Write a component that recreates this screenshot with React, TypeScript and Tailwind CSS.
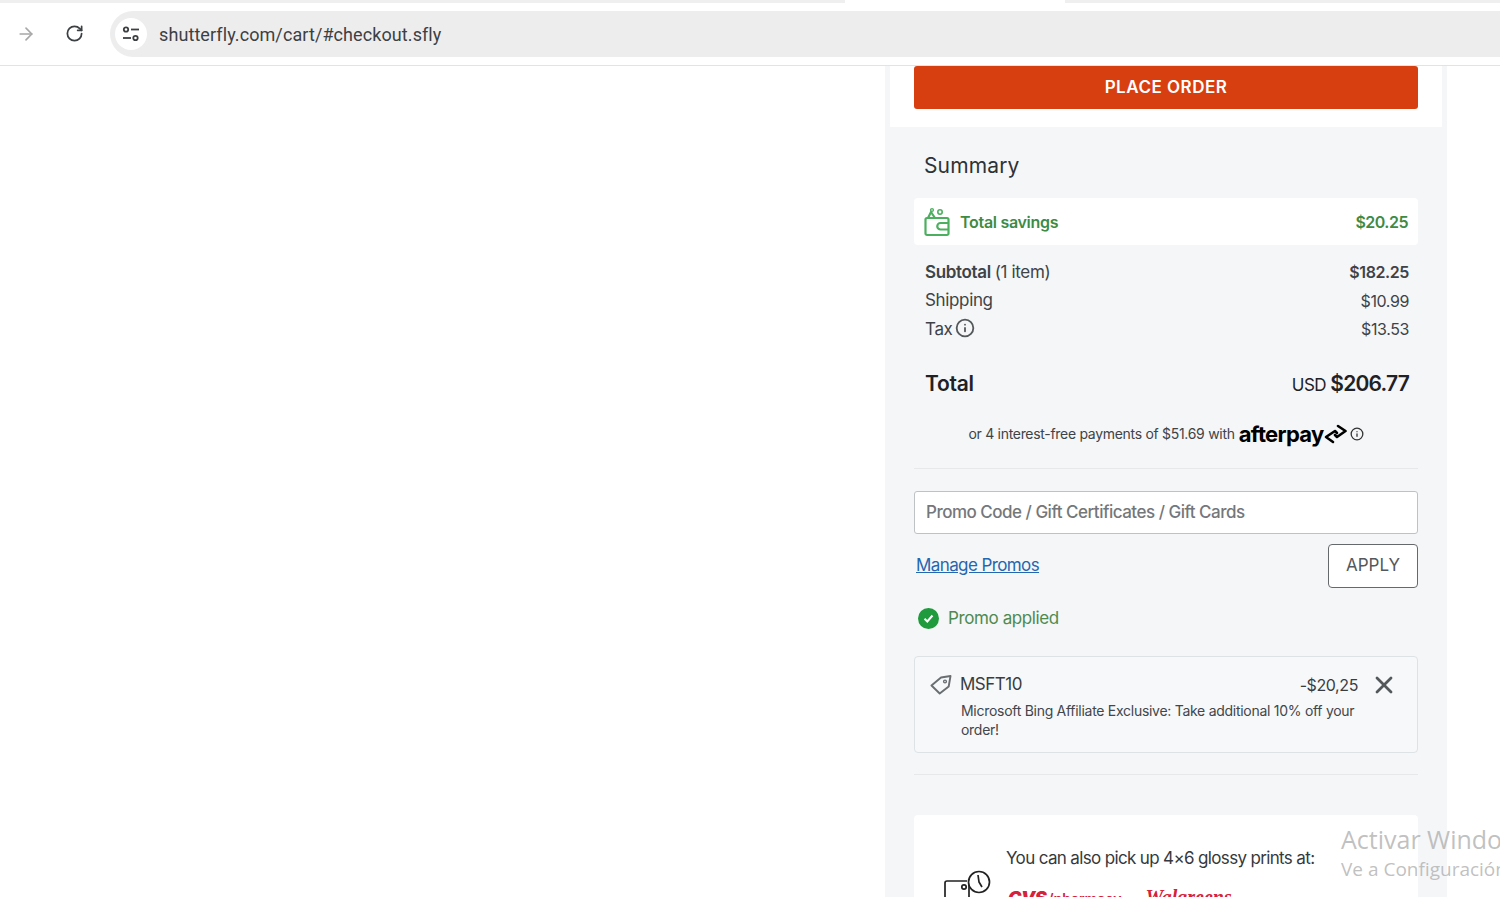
import React from 'react';
import { ArrowRight, Info, RotateCw, X } from 'lucide-react';

const fontInter = { fontFamily: 'Inter, "Liberation Sans", sans-serif' };

const TuneIcon = () => (
  <svg width="18" height="16" viewBox="0 0 18 16" fill="none" stroke="#3c4043" strokeWidth="1.8">
    <circle cx="4" cy="3.5" r="2.2" />
    <path d="M9 3.5h8" />
    <path d="M1 12h8" />
    <circle cx="13.5" cy="12" r="2.2" />
  </svg>
);

const WalletIcon = () => (
  <svg width="26" height="30" viewBox="0 0 26 30" fill="none" stroke="#4caf5f" strokeWidth="2.2" strokeLinejoin="round">
    <path d="M3 11h20a1.5 1.5 0 0 1 1.5 1.5v14a1.5 1.5 0 0 1-1.5 1.500H3a1.5 1.5 0 0 1-1.500-1.500v-14A1.5 1.5 0 0 1 3 11z" />
    <path d="M24.500 16h-8a3 3 0 0 0 0 6.500h8" />
    <path d="M4 11l3-6 4 6" />
    <circle cx="8" cy="3" r="1.400" strokeWidth="1.400" />
    <circle cx="16" cy="5" r="2.200" strokeWidth="1.600" />
  </svg>
);

const PickupIcon = () => (
  <svg width="48" height="34" viewBox="0 0 48 34" fill="none" stroke="#222" strokeWidth="1.700" strokeLinejoin="round">
    <path d="M2 34V13a2 2 0 0 1 2-2h20" />
    <path d="M26 11v23" />
    <circle cx="21" cy="17" r="2.200" />
    <circle cx="36" cy="12" r="10.500" fill="#fff" />
    <path d="M35 5l1 7 3 5" />
  </svg>
);

const AfterpayLoop = () => (
  <svg width="23" height="20" viewBox="0 0 23 20" fill="none" stroke="#000" strokeWidth="2.600" strokeLinejoin="round" strokeLinecap="round">
    <path d="M9 18L2 13l9-6 2 2" />
    <path d="M14 2l7.500 5L13 13l-2-2" />
  </svg>
);

const PromoTag = () => (
  <svg width="22" height="20" viewBox="0 0 22 20" fill="none" stroke="#6b6e71" strokeWidth="1.900" strokeLinejoin="round">
    <path d="M1.500 10.500L11 2.500l9.500-1.500-1.800 10.500-9 7z" />
    <circle cx="15" cy="6.500" r="1.400" strokeWidth="1.400" />
  </svg>
);

const Row = ({ label, value, bold }: { label: React.ReactNode; value: string; bold?: boolean }) => (
  <div className={`flex justify-between items-center h-[28.5px] text-[#3f4347] ${bold ? 'font-semibold text-[#2b2d30]' : ''}`}>
    <div className="flex items-center text-[17px] tracking-[-0.35px]">{label}</div>
    <div className="text-[16px] tracking-[-0.4px]">{value}</div>
  </div>
);

const App = () => {
  return (
    <div className="relative w-[1500px] h-[897px] overflow-hidden bg-white flex flex-col" style={fontInter}>
      <div className="h-[3px] shrink-0 bg-[#efefef] flex pl-[845px]">
        <div className="w-[220px] bg-white" />
      </div>

      <div className="h-[63px] shrink-0 border-b border-[#e3e3e3] flex items-start pt-[8px] pl-[16px]">
        <ArrowRight size={20} strokeWidth={2} className="mt-[13px] text-[#a8a8a8]" />
        <RotateCw size={19} strokeWidth={2.200} className="mt-[13px] ml-[29px] text-[#3c4043]" />
        <div className="ml-[26px] flex-1 h-[46px] rounded-l-full bg-[#eeedee] flex items-center pl-[5px]">
          <div className="w-[32px] h-[32px] rounded-full bg-white flex items-center justify-center">
            <TuneIcon />
          </div>
          <span className="ml-[12px] text-[18px] tracking-[0.09px] text-[#3c4043]" style={{ fontFamily: 'Roboto, sans-serif' }}>
            shutterfly.com/cart/#checkout.sfly
          </span>
        </div>
      </div>

      <div className="flex-1 min-h-0 pl-[885px]">
        <div className="w-[562px] h-full bg-[#f4f6f8] px-[5px]">
          <div className="bg-white h-[61px] px-[24px]">
            <button className="w-full h-[43px] rounded-[3px] bg-[#d83f10] text-white text-[17px] font-semibold tracking-[0.5px]">
              PLACE ORDER
            </button>
          </div>

          <div className="px-[24px]">
            <div className="mt-[24px] pl-[10px] text-[21px] leading-[30px] tracking-[0.15px] text-[#2f3235]">Summary</div>

            <div className="mt-[17px] h-[47px] rounded-[4px] bg-white flex items-center justify-between pl-[10px] pr-[10px] text-[#3d8b45] text-[16px] font-semibold tracking-[-0.3px]">
              <div className="flex items-center gap-[10px]">
                <WalletIcon />
                <span>Total savings</span>
              </div>
              <span className="tracking-[-0.5px]">$20.25</span>
            </div>

            <div className="mt-[13px] pl-[11px] pr-[9px]">
              <Row bold label={<span>Subtotal <span className="font-normal text-[#3f4347]">(1 item)</span></span>} value="$182.25" />
              <Row label="Shipping" value="$10.99" />
              <Row
                label={
                  <>
                    Tax
                    <Info size={20} strokeWidth={2.200} className="ml-[2px] -mt-[3px] text-[#55585b]" />
                  </>
                }
                value="$13.53"
              />
              <div className="mt-[25px] flex justify-between items-center h-[30px] text-[#1f2124] font-semibold">
                <span className="text-[21px] tracking-[-0.3px]">Total</span>
                <span className="text-[21px] tracking-[-0.8px]">
                  <span className="text-[17px] font-normal tracking-[-0.5px]">USD </span>$206.77
                </span>
              </div>
            </div>

            <div className="mt-[21px] flex items-center justify-center h-[28px] text-[14px] tracking-[-0.3px] text-[#3f4347]">
              <span>or 4 interest-free payments of $51.69 with</span>
              <span className="ml-[4px] text-[22px] font-bold tracking-[-0.7px] text-black leading-none">afterpay</span>
              <AfterpayLoop />
              <Info size={14} strokeWidth={2.200} className="ml-[3px] text-[#333]" />
            </div>

            <div className="mt-[20px] border-t border-[#e6e8ea]" />

            <div className="mt-[22px] h-[43px] rounded-[3px] border border-[#bfc2c5] bg-white flex items-center pl-[11px] pt-[2px] text-[17px] font-medium tracking-[-0.5px] text-[#74777a]">
              Promo Code / Gift Certificates / Gift Cards
            </div>

            <div className="mt-[10px] flex justify-between items-start">
              <a className="ml-[2px] mt-[9px] text-[17px] tracking-[-0.6px] text-[#2566b0] underline">Manage Promos</a>
              <button className="w-[90px] h-[44px] rounded-[4px] border border-[#66696c] bg-white text-[17px] text-[#55585b]">
                APPLY
              </button>
            </div>

            <div className="mt-[19px] h-[24px] ml-[4px] flex items-center gap-[9px] text-[17px] tracking-[-0.4px] text-[#4f8a4f]">
              <span className="w-[21px] h-[21px] rounded-full bg-[#1f9a3c] flex items-center justify-center">
                <svg width="13" height="13" viewBox="0 0 13 13" fill="none" stroke="#fff" strokeWidth="2">
                  <path d="M2.500 6.800l2.800 2.700 5.200-6" />
                </svg>
              </span>
              Promo applied
            </div>

            <div className="mt-[25px] h-[97px] rounded-[4px] border border-[#dfe2e5] bg-[#f6f8fa] pl-[15px] pr-[21px] pt-[15px]">
              <div className="flex items-center h-[26px] text-[#3a3d40]">
                <PromoTag />
                <span className="ml-[8px] text-[17px] tracking-[-0.5px]">MSFT10</span>
                <span className="ml-auto text-[16px] tracking-[-0.4px]">-$20,25</span>
                <X size={28} strokeWidth={2.400} className="ml-[12px] -mr-[2px] text-[#55585b]" />
              </div>
              <p className="mt-[3px] ml-[31px] w-[410px] text-[14px] leading-[19px] tracking-[-0.28px] text-[#43464a]">
                Microsoft Bing Affiliate Exclusive: Take additional 10% off your order!
              </p>
            </div>

            <div className="mt-[21px] border-t border-[#e6e8ea]" />

            <div className="mt-[40px] h-[120px] rounded-[4px] bg-white flex pl-[29px]">
              <div className="mt-[55px]">
                <PickupIcon />
              </div>
              <div className="ml-[15px] mt-[30px]">
                <div className="text-[17px] leading-[26px] tracking-[-0.65px] text-[#36393c] whitespace-nowrap">
                  You can also pick up 4×6 glossy prints at:
                </div>
                <div className="mt-[15px] flex items-baseline text-[#d6213a] leading-[22px]">
                  <span className="ml-[2px] text-[18px] font-black italic tracking-[-0.5px]">CVS</span>
                  <span className="ml-[2px] text-[14px] font-semibold whitespace-nowrap">/pharmacy</span>
                  <span className="ml-[24px] text-[20px] font-bold italic" style={{ fontFamily: '"Liberation Serif", serif' }}>
                    Walgreens
                  </span>
                </div>
              </div>
            </div>
          </div>
        </div>
      </div>

      <div className="absolute left-[1341px] top-[823px] text-[#b0b0b0]/80 whitespace-nowrap" style={{ fontFamily: '"Open Sans", sans-serif' }}>
        <div className="text-[25px] leading-[33px]">Activar Windows</div>
        <div className="text-[19px] leading-[27px]">Ve a Configuración para activar Windows.</div>
      </div>
    </div>
  );
};

export default App;
